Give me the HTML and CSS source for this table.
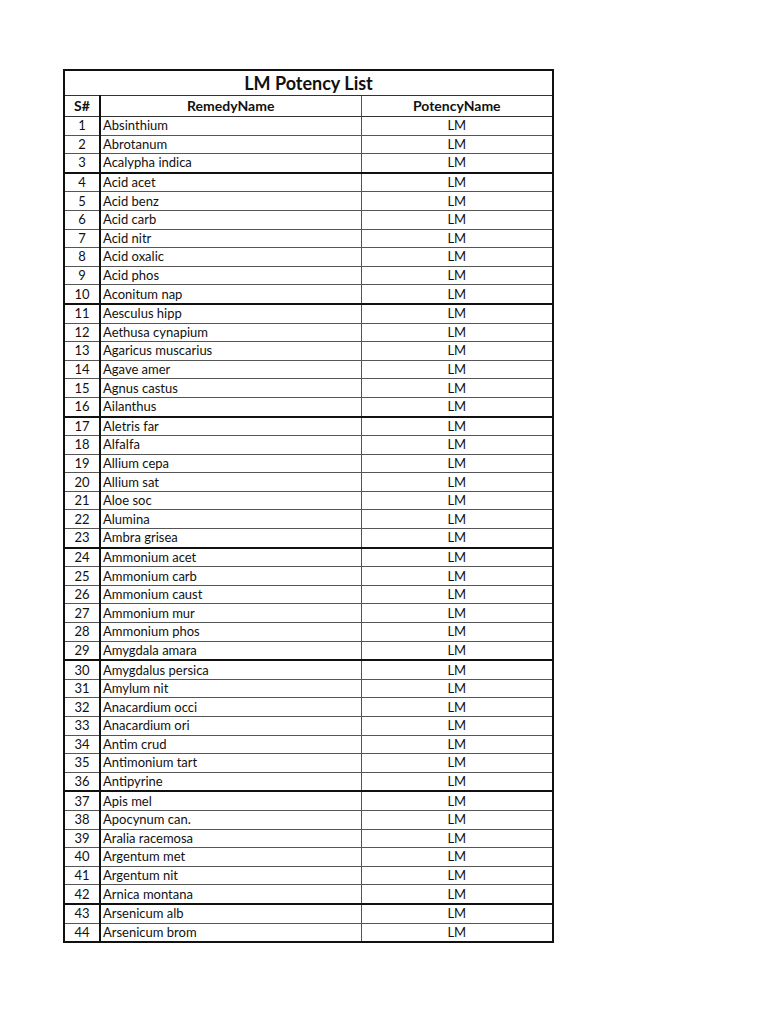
FILE: index.html
```html
<!DOCTYPE html>
<html>
<head>
<meta charset="utf-8">
<link rel="stylesheet" href="styles.css">
</head>
<body>
<div class="page">
<table class="list">
<colgroup><col class="c-num"><col class="c-name"><col class="c-pot"></colgroup>
<thead>
<tr class="title"><th colspan="3">LM Potency List</th></tr>
<tr class="head"><th class="num">S#</th><th>RemedyName</th><th>PotencyName</th></tr>
</thead>
<tbody>
<tr><td class="num">1</td><td class="name">Absinthium</td><td class="pot">LM</td></tr>
<tr><td class="num">2</td><td class="name">Abrotanum</td><td class="pot">LM</td></tr>
<tr class="thick"><td class="num">3</td><td class="name">Acalypha indica</td><td class="pot">LM</td></tr>
<tr><td class="num">4</td><td class="name">Acid acet</td><td class="pot">LM</td></tr>
<tr><td class="num">5</td><td class="name">Acid benz</td><td class="pot">LM</td></tr>
<tr><td class="num">6</td><td class="name">Acid carb</td><td class="pot">LM</td></tr>
<tr><td class="num">7</td><td class="name">Acid nitr</td><td class="pot">LM</td></tr>
<tr><td class="num">8</td><td class="name">Acid oxalic</td><td class="pot">LM</td></tr>
<tr><td class="num">9</td><td class="name">Acid phos</td><td class="pot">LM</td></tr>
<tr class="thick"><td class="num">10</td><td class="name">Aconitum nap</td><td class="pot">LM</td></tr>
<tr><td class="num">11</td><td class="name">Aesculus hipp</td><td class="pot">LM</td></tr>
<tr><td class="num">12</td><td class="name">Aethusa cynapium</td><td class="pot">LM</td></tr>
<tr><td class="num">13</td><td class="name">Agaricus muscarius</td><td class="pot">LM</td></tr>
<tr><td class="num">14</td><td class="name">Agave amer</td><td class="pot">LM</td></tr>
<tr><td class="num">15</td><td class="name">Agnus castus</td><td class="pot">LM</td></tr>
<tr class="thick"><td class="num">16</td><td class="name">Ailanthus</td><td class="pot">LM</td></tr>
<tr><td class="num">17</td><td class="name">Aletris far</td><td class="pot">LM</td></tr>
<tr><td class="num">18</td><td class="name">Alfalfa</td><td class="pot">LM</td></tr>
<tr><td class="num">19</td><td class="name">Allium cepa</td><td class="pot">LM</td></tr>
<tr><td class="num">20</td><td class="name">Allium sat</td><td class="pot">LM</td></tr>
<tr><td class="num">21</td><td class="name">Aloe soc</td><td class="pot">LM</td></tr>
<tr><td class="num">22</td><td class="name">Alumina</td><td class="pot">LM</td></tr>
<tr class="thick"><td class="num">23</td><td class="name">Ambra grisea</td><td class="pot">LM</td></tr>
<tr><td class="num">24</td><td class="name">Ammonium acet</td><td class="pot">LM</td></tr>
<tr><td class="num">25</td><td class="name">Ammonium carb</td><td class="pot">LM</td></tr>
<tr><td class="num">26</td><td class="name">Ammonium caust</td><td class="pot">LM</td></tr>
<tr><td class="num">27</td><td class="name">Ammonium mur</td><td class="pot">LM</td></tr>
<tr><td class="num">28</td><td class="name">Ammonium phos</td><td class="pot">LM</td></tr>
<tr class="thick"><td class="num">29</td><td class="name">Amygdala amara</td><td class="pot">LM</td></tr>
<tr><td class="num">30</td><td class="name">Amygdalus persica</td><td class="pot">LM</td></tr>
<tr><td class="num">31</td><td class="name">Amylum nit</td><td class="pot">LM</td></tr>
<tr><td class="num">32</td><td class="name">Anacardium occi</td><td class="pot">LM</td></tr>
<tr><td class="num">33</td><td class="name">Anacardium ori</td><td class="pot">LM</td></tr>
<tr><td class="num">34</td><td class="name">Antim crud</td><td class="pot">LM</td></tr>
<tr><td class="num">35</td><td class="name">Antimonium tart</td><td class="pot">LM</td></tr>
<tr class="thick"><td class="num">36</td><td class="name">Antipyrine</td><td class="pot">LM</td></tr>
<tr><td class="num">37</td><td class="name">Apis mel</td><td class="pot">LM</td></tr>
<tr><td class="num">38</td><td class="name">Apocynum can.</td><td class="pot">LM</td></tr>
<tr><td class="num">39</td><td class="name">Aralia racemosa</td><td class="pot">LM</td></tr>
<tr><td class="num">40</td><td class="name">Argentum met</td><td class="pot">LM</td></tr>
<tr><td class="num">41</td><td class="name">Argentum nit</td><td class="pot">LM</td></tr>
<tr class="thick"><td class="num">42</td><td class="name">Arnica montana</td><td class="pot">LM</td></tr>
<tr><td class="num">43</td><td class="name">Arsenicum alb</td><td class="pot">LM</td></tr>
<tr><td class="num">44</td><td class="name">Arsenicum brom</td><td class="pot">LM</td></tr>
</tbody>
</table>
</div>
</body>
</html>
```
FILE: styles.css
```css
html, body {
  margin: 0;
  padding: 0;
  background: #ffffff;
}
.page {
  padding: 69px 0 0 63px;
}
.list {
  border-collapse: collapse;
  table-layout: fixed;
  width: 489px;
  font-family: Lato, "Liberation Sans", sans-serif;
  font-size: 13px;
  color: #111;
  border: 2px solid #111;
}
.c-num { width: 36px; }
.c-name { width: 261px; }
.c-pot { width: 192px; }
.list th, .list td {
  border: 1px solid #555;
  padding: 0 2px;
  white-space: nowrap;
  overflow: hidden;
  line-height: 1;
}
.list .title th {
  height: 24px;
  font-size: 18px;
  font-weight: bold;
  text-align: center;
  border: 2px solid #111;
  border-bottom: 1px solid #333;
}
.list .head th {
  height: 20px;
  font-size: 14px;
  font-weight: bold;
  text-align: center;
  border-bottom: 1px solid #333;
}
.list td {
  height: 17.6px;
}
.list .num {
  text-align: center;
  border-right: 2px solid #111;
}
.list .name {
  text-align: left;
}
.list .pot {
  text-align: center;
}
.list tr.thick td {
  border-bottom: 2px solid #111;
}
.list tr > :first-child {
  border-left: 2px solid #111;
}
.list tr > :last-child {
  border-right: 2px solid #111;
}
.list tbody tr:last-child td {
  border-bottom: 2px solid #111;
}
```
